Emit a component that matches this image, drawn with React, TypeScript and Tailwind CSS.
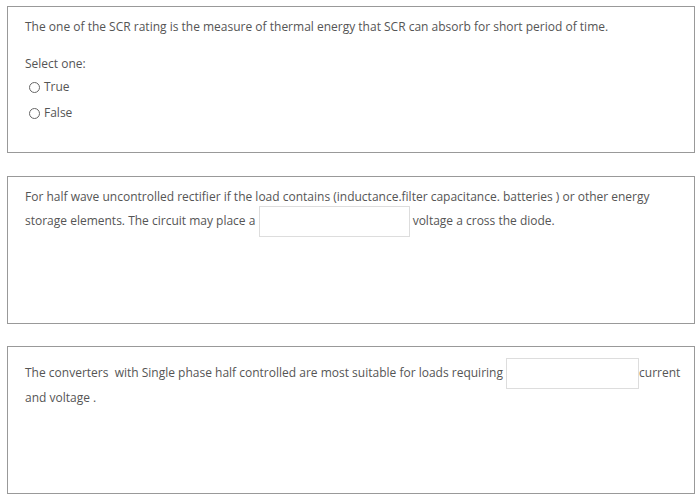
export default function App() {
  const font = { fontFamily: '"Open Sans", "Noto Sans", sans-serif' };
  return (
    <div className="w-[700px] h-[497px] bg-white text-[12px] text-[#555]" style={font}>
      <div className="pt-[6px] pl-[7px] flex flex-col">
        <section className="w-[688px] h-[147px] border border-[#999] pl-[17px] pr-3 pt-[11px]">
          <p className="leading-[18px]">
            The one of the SCR rating is the measure of thermal energy that SCR can absorb for short period of time.
          </p>
          <p className="mt-[19px] leading-[18px]">Select one:</p>
          <div className="mt-[5px] flex flex-col gap-[8px] pl-[4px]">
            <label className="flex items-center gap-[4px] leading-[18px]">
              <span className="w-[11px] h-[11px] rounded-full border border-[#666]" />
              True
            </label>
            <label className="flex items-center gap-[4px] leading-[18px]">
              <span className="w-[11px] h-[11px] rounded-full border border-[#666]" />
              False
            </label>
          </div>
        </section>

        <section className="w-[688px] mt-[23px] h-[148px] border border-[#999] pl-[17px] pr-4 pt-[8px]">
          <p className="leading-[24px]">
            For half wave uncontrolled rectifier if the load contains (inductance.filter capacitance. batteries ) or other energy storage elements. The circuit may place a{" "}
            <input className="w-[151px] h-[31px] -my-[4px] border border-[#ddd] align-middle outline-none" />{" "}
            voltage a cross the diode.
          </p>
        </section>

        <section className="w-[688px] mt-[22px] h-[148px] border border-[#999] pl-[17px] pr-[2px] pt-[13px]">
          <p className="leading-[25px]">
            The converters&nbsp; with Single phase half controlled are most suitable for loads requiring{" "}
            <input className="w-[133px] h-[31px] -my-[4px] border border-[#ddd] align-middle outline-none" />
            current and voltage .
          </p>
        </section>
      </div>
    </div>
  );
}
